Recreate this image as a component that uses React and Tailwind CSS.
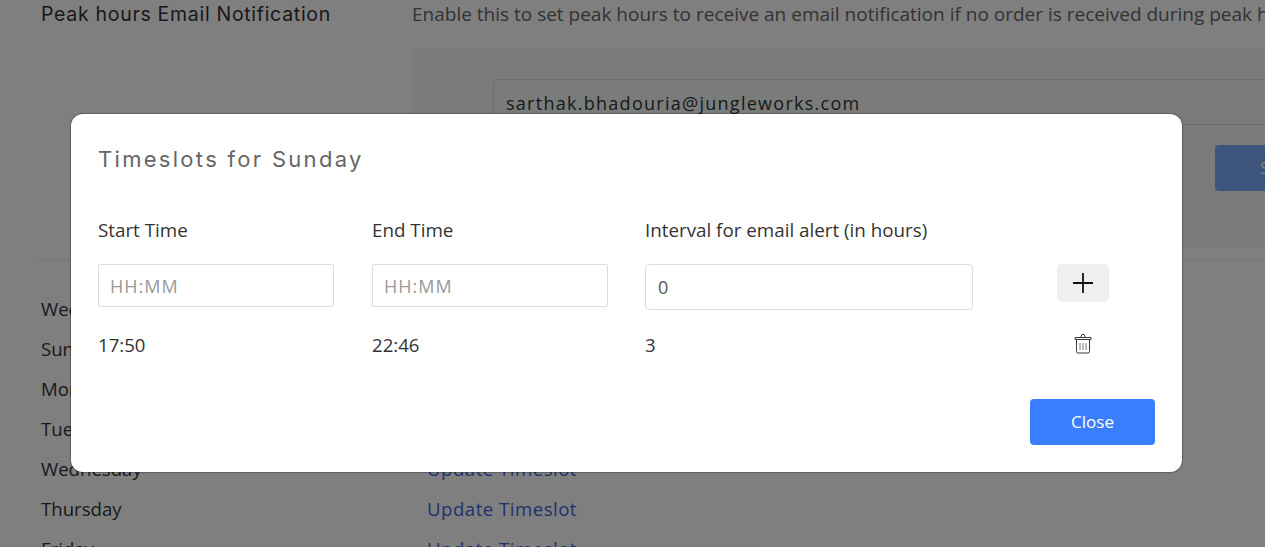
import React from "react";

const sans = "font-['Open_Sans','Noto_Sans',sans-serif]";

function Trash() {
  return (
    <svg width="18" height="21" viewBox="0 0 18 21" fill="none" stroke="#3a3a3a" strokeWidth="1">
      <path d="M1 4.5h16v2H1z" />
      <path d="M6.5 4.5 8 1.5h2l1.5 3" />
      <path d="M2.5 6.5v12a1.5 1.5 0 0 0 1.5 1.5h10a1.5 1.5 0 0 0 1.5-1.5v-12" />
      <path d="M6 10v7M9 10v7M12 10v7" stroke="#777" />
    </svg>
  );
}

function Plus() {
  return (
    <svg width="22" height="22" viewBox="0 0 22 22" stroke="#111" strokeWidth="1.8">
      <path d="M1 11h20M11 1v20" />
    </svg>
  );
}

const days = ["Weekend", "Sunday", "Monday", "Tuesday", "Wednesday", "Thursday", "Friday"];

export default function App() {
  return (
    <div className={`relative h-[547px] w-full overflow-hidden bg-white text-[#333] ${sans}`}>
      <div className="flex pl-[41px] pt-[1px]">
        <div className="w-[371px] shrink-0 text-[19.5px] leading-[26px] tracking-[0.7px] text-[#333] font-['Inter',sans-serif]">
          Peak hours Email Notification
        </div>
        <div className="min-w-0 flex-1 whitespace-nowrap text-[19px] leading-[26px] text-[#666]">
          Enable this to set peak hours to receive an email notification if no order is received during peak hours
        </div>
      </div>

      <div className="ml-[412px] mt-[21px] h-[200px] bg-[#f3f9f5] pl-[81px] pt-[31px]">
        <div className="flex h-[46px] w-[900px] items-center rounded-l border border-[#ddd] bg-[#f3f9f5] pl-3 pt-[2px] text-[18px] tracking-[1.27px] text-[#333]">
          sarthak.bhadouria@jungleworks.com
        </div>
        <div className="ml-[722px] mt-[20px] flex h-[46px] w-[120px] items-center rounded bg-[#7aa9f8] pl-[45px] text-[17px] text-white">
          Save
        </div>
      </div>

      <div className="ml-[36px] mt-[12px] border-t border-[#f0f0f0] pl-[5px] pt-[28px]">
        {days.map((d) => (
          <div key={d} className="flex h-[40px] items-start text-[18.6px] leading-[40px]">
            <div className="w-[386px] shrink-0 text-[#333] leading-[40px]">{d}</div>
            <div className="text-[#3d66d8] tracking-[0.5px]">Update Timeslot</div>
          </div>
        ))}
      </div>

      <div className="absolute inset-0 bg-black/50" />

      <div className="absolute left-[71px] top-[114px] h-[358px] w-[1111px] rounded-[12px] bg-white pl-[27px] pt-[30px] shadow-[0_0_1px_1px_rgba(0,0,0,0.25)]">
        <div className="text-[22px] leading-[30px] tracking-[2.3px] text-[#666] font-['Inter',sans-serif]">
          Timeslots for Sunday
        </div>

        <div className="mt-[41px] flex text-[18.8px] leading-[30px] text-[#333]">
          <div className="w-[274px]">Start Time</div>
          <div className="w-[273px]">End Time</div>
          <div>Interval for email alert (in hours)</div>
        </div>

        <div className="mt-[19px] flex items-start">
          <div className="mr-[38px] flex h-[43px] w-[236px] items-center rounded-[2px] border border-[#ddd] pl-[11px] pt-[2px] text-[18px] tracking-[1px] text-[#999]">
            HH:MM
          </div>
          <div className="mr-[37px] flex h-[43px] w-[236px] items-center rounded-[2px] border border-[#ddd] pl-[11px] pt-[2px] text-[18px] tracking-[1px] text-[#999]">
            HH:MM
          </div>
          <div className="flex h-[46px] w-[328px] items-center rounded-[4px] border border-[#ddd] pl-3 text-[18px] text-[#555]">
            0
          </div>
          <div className="ml-[84px] flex h-[38px] w-[52px] items-center justify-center rounded-[5px] bg-[#efefef]">
            <Plus />
          </div>
        </div>

        <div className="mt-[20px] flex h-[30px] items-center text-[18.6px] leading-[30px] text-[#333]">
          <div className="w-[274px]">17:50</div>
          <div className="w-[273px]">22:46</div>
          <div className="w-[412px]">3</div>
          <div className="mb-[4px] flex w-[52px] justify-center"><Trash /></div>
        </div>

        <div className="mt-[39px] flex justify-end pr-[27px]">
          <div className="flex h-[46px] w-[125px] items-center justify-center rounded-[4px] bg-[#3a7dff] text-[17px] text-white">
            Close
          </div>
        </div>
      </div>
    </div>
  );
}
